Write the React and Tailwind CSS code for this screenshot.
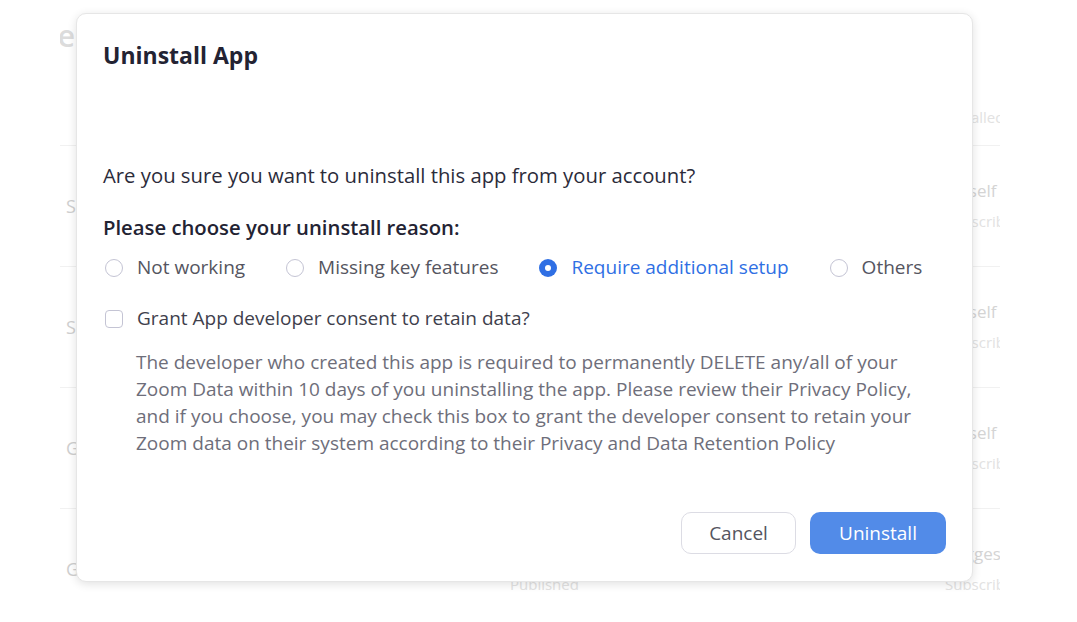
import { useState } from 'react';

const reasons = ['Not working', 'Missing key features', 'Require additional setup', 'Others'];

const rows = [
  { name: 'Slack', status: 'Published', by: 'Myself', plan: 'Subscribed' },
  { name: 'Salesforce', status: 'Published', by: 'Myself', plan: 'Subscribed' },
  { name: 'Google Drive', status: 'Published', by: 'Myself', plan: 'Subscribed' },
  { name: 'Gmail', status: 'Published', by: 'Suggested', plan: 'Subscribed' },
];

function Radio({ checked }) {
  if (checked) {
    return (
      <span className="flex h-[18px] w-[18px] shrink-0 items-center justify-center rounded-full bg-[#2f6fe4]">
        <span className="h-[6px] w-[6px] rounded-full bg-white" />
      </span>
    );
  }
  return <span className="h-[18px] w-[18px] shrink-0 rounded-full border border-[#c4c4d4] bg-white" />;
}

export default function App() {
  const [reason, setReason] = useState('Require additional setup');
  const [consent, setConsent] = useState(false);

  return (
    <div className="relative h-[622px] w-full overflow-hidden bg-white font-['Open_Sans',sans-serif]">
      {/* faded page behind the dialog */}
      <div className="ml-[60px] w-[940px] overflow-hidden text-[#dcdcdc]">
        <div className="h-[76px] whitespace-nowrap pt-[16px] text-[30px] font-semibold leading-[40px]">
          <span className="-ml-[91px]">Installed Apps</span>
        </div>
        <div className="grid h-[69px] grid-cols-[450px_435px_1fr] items-center pt-[14px] text-[15px] text-[#e2e2e2]">
          <span />
          <span>Status</span>
          <span className="whitespace-nowrap">Installed</span>
        </div>
        {rows.map((row) => (
          <div key={row.name} className="grid h-[121px] grid-cols-[450px_435px_1fr] items-center border-t border-[#f1f1f1]">
            <span className="pl-[6px] text-[18px] text-[#cfcfcf]">{row.name}</span>
            <div className="flex flex-col text-[15px] leading-[31px]">
              <span className="text-[#d6d6d6]">Type</span>
              <span className="text-[#e2e2e2]">{row.status}</span>
            </div>
            <div className="flex flex-col whitespace-nowrap text-[17px] leading-[31px]">
              <span className="text-[#d4d4d4]">{row.by}</span>
              <span className="text-[15px] text-[#e2e2e2]">{row.plan}</span>
            </div>
          </div>
        ))}
      </div>

      {/* dialog */}
      <div className="absolute left-[76px] top-[13px] flex h-[569px] w-[897px] flex-col rounded-[10px] border border-[#e6e6e6] bg-white px-[26px] pb-[27px] pt-[26px] shadow-[0_2px_10px_rgba(0,0,0,0.12)]">
        <h1 className="text-[23px] font-bold leading-[30px] text-[#232333]">Uninstall App</h1>

        <p className="mt-[92px] text-[20.3px] leading-[27px] text-[#2b2b3a]">
          Are you sure you want to uninstall this app from your account?
        </p>

        <p className="mt-[25px] text-[20.3px] font-semibold leading-[27px] text-[#232333]">
          Please choose your uninstall reason:
        </p>

        <div className="mt-[13px] flex items-center gap-[41px] pl-[2px]">
          {reasons.map((r) => (
            <button
              key={r}
              type="button"
              onClick={() => setReason(r)}
              className="flex items-center gap-[14px] text-[19px] leading-[27px]"
            >
              <Radio checked={reason === r} />
              <span className={reason === r ? 'text-[#2f6fe4]' : 'text-[#555560]'}>{r}</span>
            </button>
          ))}
        </div>

        <button
          type="button"
          onClick={() => setConsent(!consent)}
          className="mt-[24px] flex items-center gap-[14px] pl-[2px] text-left text-[19px] leading-[27px] text-[#40404c]"
        >
          <span
            className={
              consent
                ? 'h-[18px] w-[18px] shrink-0 rounded-[4px] bg-[#2f6fe4]'
                : 'h-[18px] w-[18px] shrink-0 rounded-[4px] border border-[#c4c4d4] bg-white'
            }
          />
          Grant App developer consent to retain data?
        </button>

        <p className="mt-[17px] whitespace-nowrap pl-[33px] text-[19px] leading-[27px] text-[#6e6e7a]">
          The developer who created this app is required to permanently DELETE any/all of your
          <br />
          Zoom Data within 10 days of you uninstalling the app. Please review their Privacy Policy,
          <br />
          and if you choose, you may check this box to grant the developer consent to retain your
          <br />
          Zoom data on their system according to their Privacy and Data Retention Policy
        </p>

        <div className="mt-auto flex justify-end gap-[14px]">
          <button
            type="button"
            className="h-[42px] w-[115px] rounded-[10px] border border-[#dcdce4] bg-white text-[19px] text-[#555560]"
          >
            Cancel
          </button>
          <button type="button" className="h-[42px] w-[136px] rounded-[10px] bg-[#528be8] text-[19px] text-white">
            Uninstall
          </button>
        </div>
      </div>
    </div>
  );
}
